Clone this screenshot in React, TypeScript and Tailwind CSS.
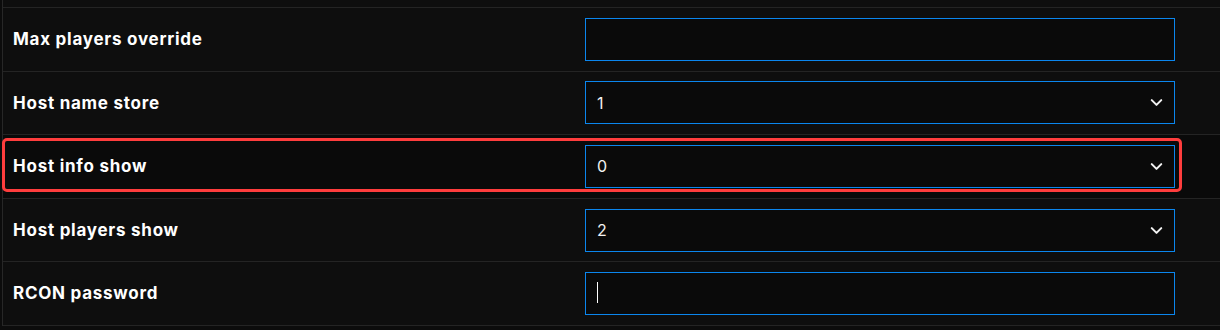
import { ChevronDown } from "lucide-react";

type Row = {
  label: string;
  kind: "text" | "select";
  value?: string;
  caret?: boolean;
  highlight?: boolean;
};

const rows: Row[] = [
  { label: "Max players override", kind: "text", value: "" },
  { label: "Host name store", kind: "select", value: "1" },
  { label: "Host info show", kind: "select", value: "0", highlight: true },
  { label: "Host players show", kind: "select", value: "2" },
  { label: "RCON password", kind: "text", value: "", caret: true },
];

const font = { fontFamily: "Inter, 'Noto Sans', sans-serif" };

function Field({ row }: { row: Row }) {
  return (
    <div className="flex h-[43px] w-[590px] items-center border border-[#0b86ee] bg-[#0a0a0a] pl-[11px] pr-[8px] text-[16px] text-[#f2f2f2]">
      <span className="flex-1">
        {row.caret ? <span className="inline-block h-[21px] w-px translate-y-[2px] bg-white" /> : row.value}
      </span>
      {row.kind === "select" && <ChevronDown size={19} strokeWidth={2.6} className="text-[#f2f2f2]" />}
    </div>
  );
}

export default function App() {
  return (
    <div className="h-[330px] w-[1220px] overflow-hidden bg-[#0c0c0c]" style={font}>
      <div className="ml-[2px] border-l border-[#272727]">
        <div className="h-[8px] border-b border-[#242424] bg-[#0e0e0e]" />
        {rows.map((row) => (
          <div
            key={row.label}
            className={`relative flex h-[63.6px] items-center border-b border-[#242424] ${
              row.highlight ? "bg-[#0a0a0a]" : "bg-[#0e0e0e]"
            }`}
          >
            <div className="w-[582px] pl-[10px] pt-px text-[17px] font-bold tracking-[0.75px] text-white">{row.label}</div>
            <Field row={row} />
            {row.highlight && (
              <div className="pointer-events-none absolute left-[-1px] top-[3px] h-[54px] w-[1180px] rounded-[5px] border-[3px] border-[#ff3d3d]" />
            )}
          </div>
        ))}
      </div>
    </div>
  );
}
